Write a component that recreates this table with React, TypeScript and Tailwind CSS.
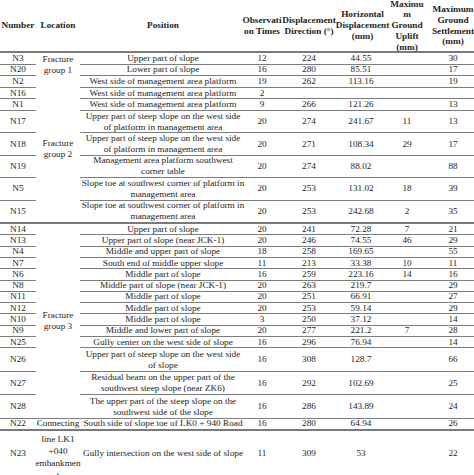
import React from "react";

type Row = {
  n: string;
  loc?: { lines: string[]; cls: string };
  pos: string[];
  obs: string;
  dir: string;
  hor: string;
  up: string;
  set: string;
  thick?: boolean;
};

const L = "West side of management area platform";
const rows: Row[] = [
  { n: "N3", loc: { lines: ["Fracture", "group 1"], cls: "row-span-2" }, pos: ["Upper part of slope"], obs: "12", dir: "224", hor: "44.55", up: "", set: "30" },
  { n: "N20", pos: ["Lower part of slope"], obs: "16", dir: "280", hor: "85.51", up: "", set: "17" },
  { n: "N2", loc: { lines: ["Fracture", "group 2"], cls: "row-span-8 border-b-2 border-[#7a7a7a]" }, pos: [L], obs: "19", dir: "262", hor: "113.16", up: "", set: "19" },
  { n: "N16", pos: [L], obs: "2", dir: "", hor: "", up: "", set: "" },
  { n: "N1", pos: [L], obs: "9", dir: "266", hor: "121.26", up: "", set: "13" },
  { n: "N17", pos: ["Upper part of steep slope on the west side", "of platform in management area"], obs: "20", dir: "274", hor: "241.67", up: "11", set: "13" },
  { n: "N18", pos: ["Upper part of steep slope on the west side", "of platform in management area"], obs: "20", dir: "271", hor: "108.34", up: "29", set: "17" },
  { n: "N19", pos: ["Management area platform southwest", "corner table"], obs: "20", dir: "274", hor: "88.02", up: "", set: "88" },
  { n: "N5", pos: ["Slope toe at southwest corner of platform in", "management area"], obs: "20", dir: "253", hor: "131.02", up: "18", set: "39" },
  { n: "N15", pos: ["Slope toe at southwest corner of platform in", "management area"], obs: "20", dir: "253", hor: "242.68", up: "2", set: "35", thick: true },
  { n: "N14", loc: { lines: ["Fracture", "group 3"], cls: "row-span-14 border-b border-[#7d7d7d]" }, pos: ["Upper part of slope"], obs: "20", dir: "241", hor: "72.28", up: "7", set: "21" },
  { n: "N13", pos: ["Upper part of slope (near JCK-1)"], obs: "20", dir: "246", hor: "74.55", up: "46", set: "29" },
  { n: "N4", pos: ["Middle and upper part of slope"], obs: "18", dir: "258", hor: "169.65", up: "", set: "55" },
  { n: "N7", pos: ["South end of middle upper slope"], obs: "11", dir: "213", hor: "33.38", up: "10", set: "11" },
  { n: "N6", pos: ["Middle part of slope"], obs: "16", dir: "259", hor: "223.16", up: "14", set: "16" },
  { n: "N8", pos: ["Middle part of slope (near JCK-1)"], obs: "20", dir: "263", hor: "219.7", up: "", set: "29" },
  { n: "N11", pos: ["Middle part of slope"], obs: "20", dir: "251", hor: "66.91", up: "", set: "27" },
  { n: "N12", pos: ["Middle part of slope"], obs: "20", dir: "253", hor: "59.14", up: "", set: "29" },
  { n: "N10", pos: ["Middle part of slope"], obs: "3", dir: "250", hor: "37.12", up: "", set: "14" },
  { n: "N9", pos: ["Middle and lower part of slope"], obs: "20", dir: "277", hor: "221.2", up: "7", set: "28" },
  { n: "N25", pos: ["Gully center on the west side of slope"], obs: "16", dir: "296", hor: "76.94", up: "", set: "14" },
  { n: "N26", pos: ["Upper part of steep slope on the west side", "of slope"], obs: "16", dir: "308", hor: "128.7", up: "", set: "66" },
  { n: "N27", pos: ["Residual beam on the upper part of the", "southwest steep slope (near ZK6)"], obs: "16", dir: "292", hor: "102.69", up: "", set: "25" },
  { n: "N28", pos: ["The upper part of the steep slope on the", "southwest side of the slope"], obs: "16", dir: "286", hor: "143.89", up: "", set: "24" },
  { n: "N22", loc: { lines: ["Connecting"], cls: "row-span-1 border-b-2 border-[#7a7a7a]" }, pos: ["South side of slope toe of LK0 + 940 Road"], obs: "16", dir: "280", hor: "64.94", up: "", set: "26", thick: true },
  { n: "N23", loc: { lines: ["line LK1", "+040", "embankmen", "t"], cls: "row-span-1 !items-start pt-[2px] leading-[12px]" }, pos: ["Gully intersection on the west side of slope"], obs: "11", dir: "309", hor: "53", up: "", set: "22" },
];

const base = "flex items-center justify-center text-center whitespace-nowrap";

function Lines({ lines }: { lines: string[] }) {
  return (
    <span className="block">
      {lines.map((t, i) => (
        <span key={i} className="block">
          {t}
        </span>
      ))}
    </span>
  );
}

export default function App() {
  const headers: { lines: string[]; cls?: string }[] = [
    { lines: ["Number"] },
    { lines: ["Location"] },
    { lines: ["Position"] },
    { lines: ["Observati", "on Times"] },
    { lines: ["Displacement", "Direction (°)"] },
    { lines: ["Horizontal", "Displacement", "(mm)"], cls: "pl-[3px]" },
    { lines: ["Maximu", "m", "Ground", "Uplift", "(mm)"] },
    { lines: ["Maximum", "Ground", "Settlement", "(mm)"] },
  ];

  return (
    <div className="w-[474px] h-[475px] overflow-hidden bg-white text-[#1e1e1e] font-['Liberation_Serif',serif] text-[9.25px] leading-[11px]">
      <div className="grid grid-cols-[36px_44px_166px_32px_62px_42px_50px_42px] grid-rows-[53px_11.6px_11.6px_11.6px_11.6px_11.6px_22.4px_22.4px_22.4px_22.4px_23.5px_11.3px_11.3px_11.3px_11.3px_11.3px_11.3px_11.3px_11.3px_11.3px_11.3px_11.3px_23.6px_23.6px_23.6px_11.5px_46px]">
        {headers.map((h, i) => (
          <div
            key={"h" + i}
            className={`${base} font-bold leading-[10.8px] border-b-2 border-[#7a7a7a] ${h.cls ?? ""}`}
          >
            <Lines lines={h.lines} />
          </div>
        ))}
        {rows.map((r) => {
          const b = r.thick
            ? "border-b-2 border-[#7a7a7a]"
            : r.n === "N23"
            ? ""
            : "border-b border-[#7d7d7d]";
          return (
            <React.Fragment key={r.n}>
              <div className={`${base} ${b}`}>{r.n}</div>
              {r.loc && (
                <div className={`${base} ${r.loc.cls}`}>
                  <Lines lines={r.loc.lines} />
                </div>
              )}
              <div className={`${base} ${b}`}>
                <Lines lines={r.pos} />
              </div>
              <div className={`${base} ${b}`}>{r.obs}</div>
              <div className={`${base} ${b}`}>{r.dir}</div>
              <div className={`${base} ${b}`}>{r.hor}</div>
              <div className={`${base} ${b}`}>{r.up}</div>
              <div className={`${base} ${b}`}>{r.set}</div>
            </React.Fragment>
          );
        })}
      </div>
    </div>
  );
}
